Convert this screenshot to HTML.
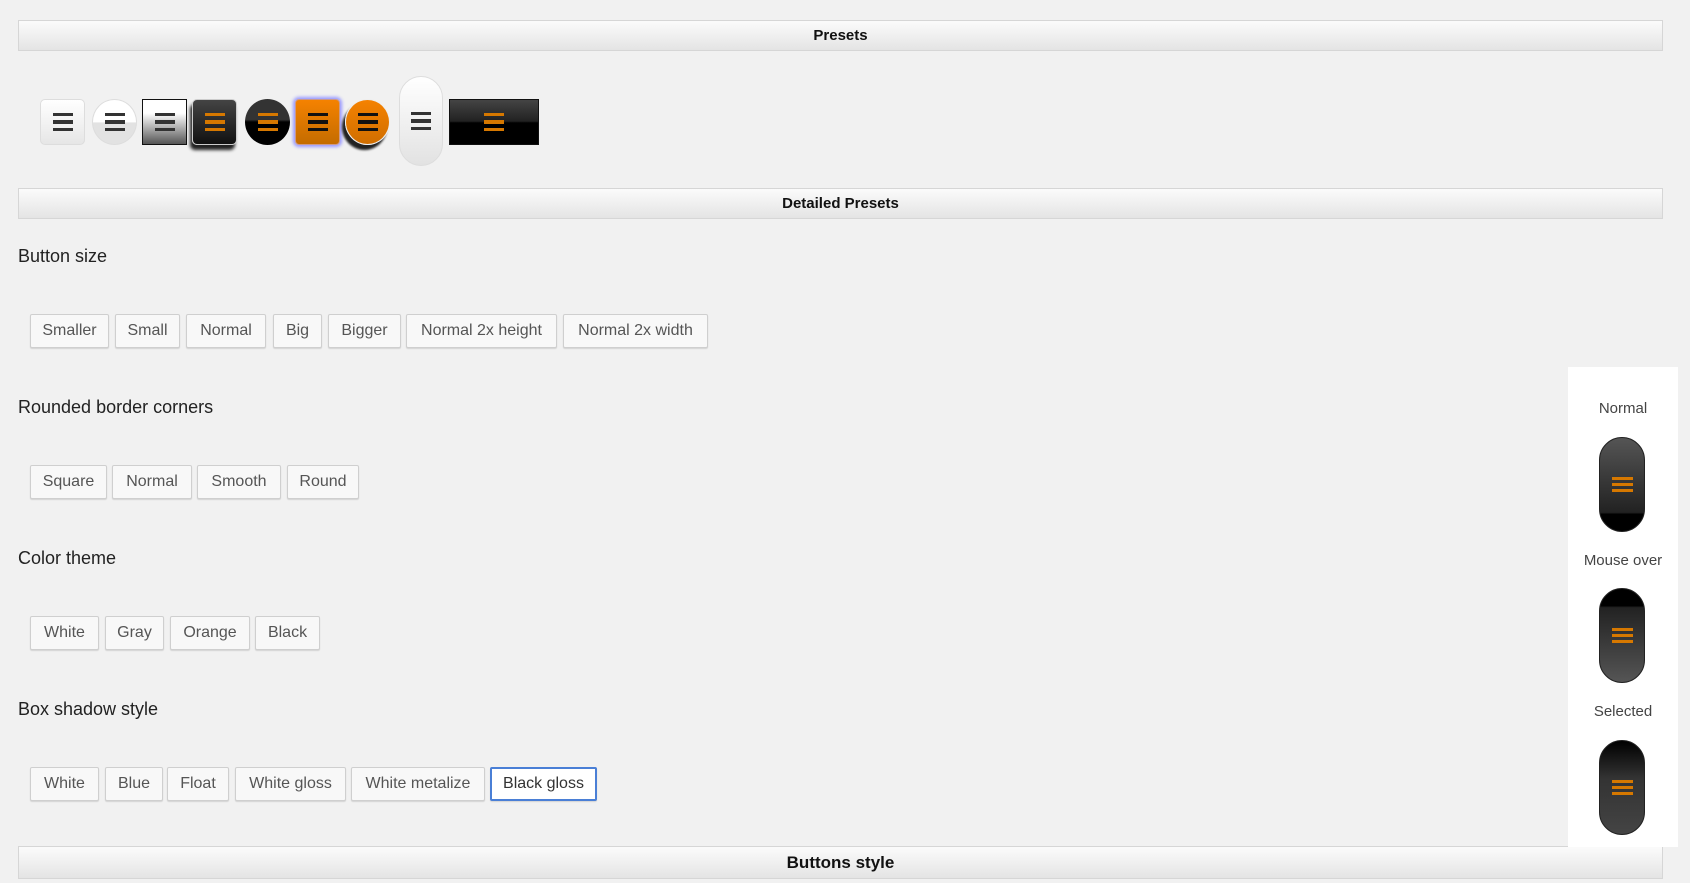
<!DOCTYPE html>
<html><head><meta charset="utf-8"><style>
body{margin:0;width:1690px;height:883px;background:#f1f1f1;font-family:"Liberation Sans",sans-serif;position:relative;overflow:hidden}
.bar{position:absolute;left:18px;width:1645px;height:31px;border:1px solid #d6d6d6;box-sizing:border-box;background:linear-gradient(#fbfbfb,#e4e4e4);text-align:center;line-height:29px;font-size:15px;font-weight:bold;color:#111}
.t{position:absolute;left:18px;font-size:18px;color:#222}
.b{position:absolute;height:34px;box-sizing:border-box;border:1px solid #cfcfcf;border-radius:2px;background:#f8f8f8;box-shadow:0 1px 1px rgba(0,0,0,.12);font-size:16px;color:#555;text-align:center;line-height:32px}
.p{position:absolute;box-sizing:border-box;display:flex;flex-direction:column;align-items:center;justify-content:center;gap:4px}
.p i{display:block;width:20px;height:3.5px;background:#333}
.o i{background:#d67800}
.k i{background:#111}
.side{position:absolute;left:1568px;top:367px;width:110px;height:480px;background:#fff}
.side span{position:absolute;width:110px;text-align:center;font-size:15px;color:#444}
.pill{position:absolute;left:31px;width:46px;height:95px;border-radius:23px;border:1px solid #222;box-sizing:border-box;display:flex;flex-direction:column;align-items:center;justify-content:center;gap:3px}
.pill i{display:block;width:21px;height:3px;background:#d67800}
</style></head><body>
<div class="bar" style="top:20px">Presets</div>
<div class="p" style="left:40px;top:99px;width:45px;height:46px;border:1px solid #ddd;border-radius:5px;background:linear-gradient(#fff,#e6e6e6)"><i></i><i></i><i></i></div>
<div class="p" style="left:92px;top:99px;width:45px;height:46px;border-radius:50%;border:1px solid #ddd;background:linear-gradient(#fff 50%,#e2e2e2 52%)"><i></i><i></i><i></i></div>
<div class="p" style="left:142px;top:99px;width:45px;height:46px;border:1px solid #111;background:linear-gradient(#fff 30%,#555)"><i></i><i></i><i></i></div>
<div class="p o" style="left:192px;top:99px;width:45px;height:46px;border:1px solid #ccc;border-radius:5px;background:linear-gradient(#444,#111);box-shadow:-2px 5px 3px #222"><i></i><i></i><i></i></div>
<div class="p o" style="left:245px;top:99px;width:45px;height:46px;border-radius:50%;background:linear-gradient(#333 45%,#000 50%)"><i></i><i></i><i></i></div>
<div class="p k" style="left:295px;top:99px;width:45px;height:46px;border:1px solid #c98;border-radius:4px;background:linear-gradient(#f58200,#c46c00);box-shadow:0 0 3px 2px #99f"><i></i><i></i><i></i></div>
<div class="p k" style="left:345px;top:99px;width:45px;height:46px;border-radius:50%;border:1px solid #eee;background:linear-gradient(#f58200,#d06e00);box-shadow:-3px 5px 2px #222"><i></i><i></i><i></i></div>
<div class="p" style="left:399px;top:76px;width:44px;height:90px;border-radius:22px;border:1px solid #ddd;background:linear-gradient(#fff,#e2e2e2)"><i></i><i></i><i></i></div>
<div class="p o" style="left:449px;top:99px;width:90px;height:46px;border:1px solid #111;background:linear-gradient(#444,#222 48%,#000 52%)"><i></i><i></i><i></i></div>
<div class="bar" style="top:188px">Detailed Presets</div>
<div class="t" style="top:246px">Button size</div>
<div class="b" style="left:30px;top:314px;width:79px">Smaller</div>
<div class="b" style="left:115px;top:314px;width:65px">Small</div>
<div class="b" style="left:186px;top:314px;width:80px">Normal</div>
<div class="b" style="left:273px;top:314px;width:49px">Big</div>
<div class="b" style="left:328px;top:314px;width:73px">Bigger</div>
<div class="b" style="left:406px;top:314px;width:151px">Normal 2x height</div>
<div class="b" style="left:563px;top:314px;width:145px">Normal 2x width</div>
<div class="t" style="top:397px">Rounded border corners</div>
<div class="b" style="left:30px;top:465px;width:77px">Square</div>
<div class="b" style="left:112px;top:465px;width:80px">Normal</div>
<div class="b" style="left:197px;top:465px;width:84px">Smooth</div>
<div class="b" style="left:287px;top:465px;width:72px">Round</div>
<div class="t" style="top:548px">Color theme</div>
<div class="b" style="left:30px;top:616px;width:69px">White</div>
<div class="b" style="left:105px;top:616px;width:59px">Gray</div>
<div class="b" style="left:170px;top:616px;width:80px">Orange</div>
<div class="b" style="left:255px;top:616px;width:65px">Black</div>
<div class="t" style="top:699px">Box shadow style</div>
<div class="b" style="left:30px;top:767px;width:69px">White</div>
<div class="b" style="left:105px;top:767px;width:58px">Blue</div>
<div class="b" style="left:167px;top:767px;width:62px">Float</div>
<div class="b" style="left:235px;top:767px;width:111px">White gloss</div>
<div class="b" style="left:351px;top:767px;width:134px">White metalize</div>
<div class="b" style="left:490px;top:767px;width:107px;border:2px solid #4a7fd6;line-height:30px;color:#333;background:#fff">Black gloss</div>
<div class="bar" style="top:846px;height:33px;font-size:17px;line-height:31px">Buttons style</div>
<div class="side">
<span style="top:33px">Normal</span>
<div class="pill" style="top:70px;background:linear-gradient(#555,#222 80%,#000 82%)"><i></i><i></i><i></i></div>
<span style="top:185px">Mouse over</span>
<div class="pill" style="top:221px;background:linear-gradient(#000 18%,#222 20%,#555)"><i></i><i></i><i></i></div>
<span style="top:336px">Selected</span>
<div class="pill" style="top:373px;background:linear-gradient(#000,#333 40%,#444)"><i></i><i></i><i></i></div>
</div>
</body></html>
